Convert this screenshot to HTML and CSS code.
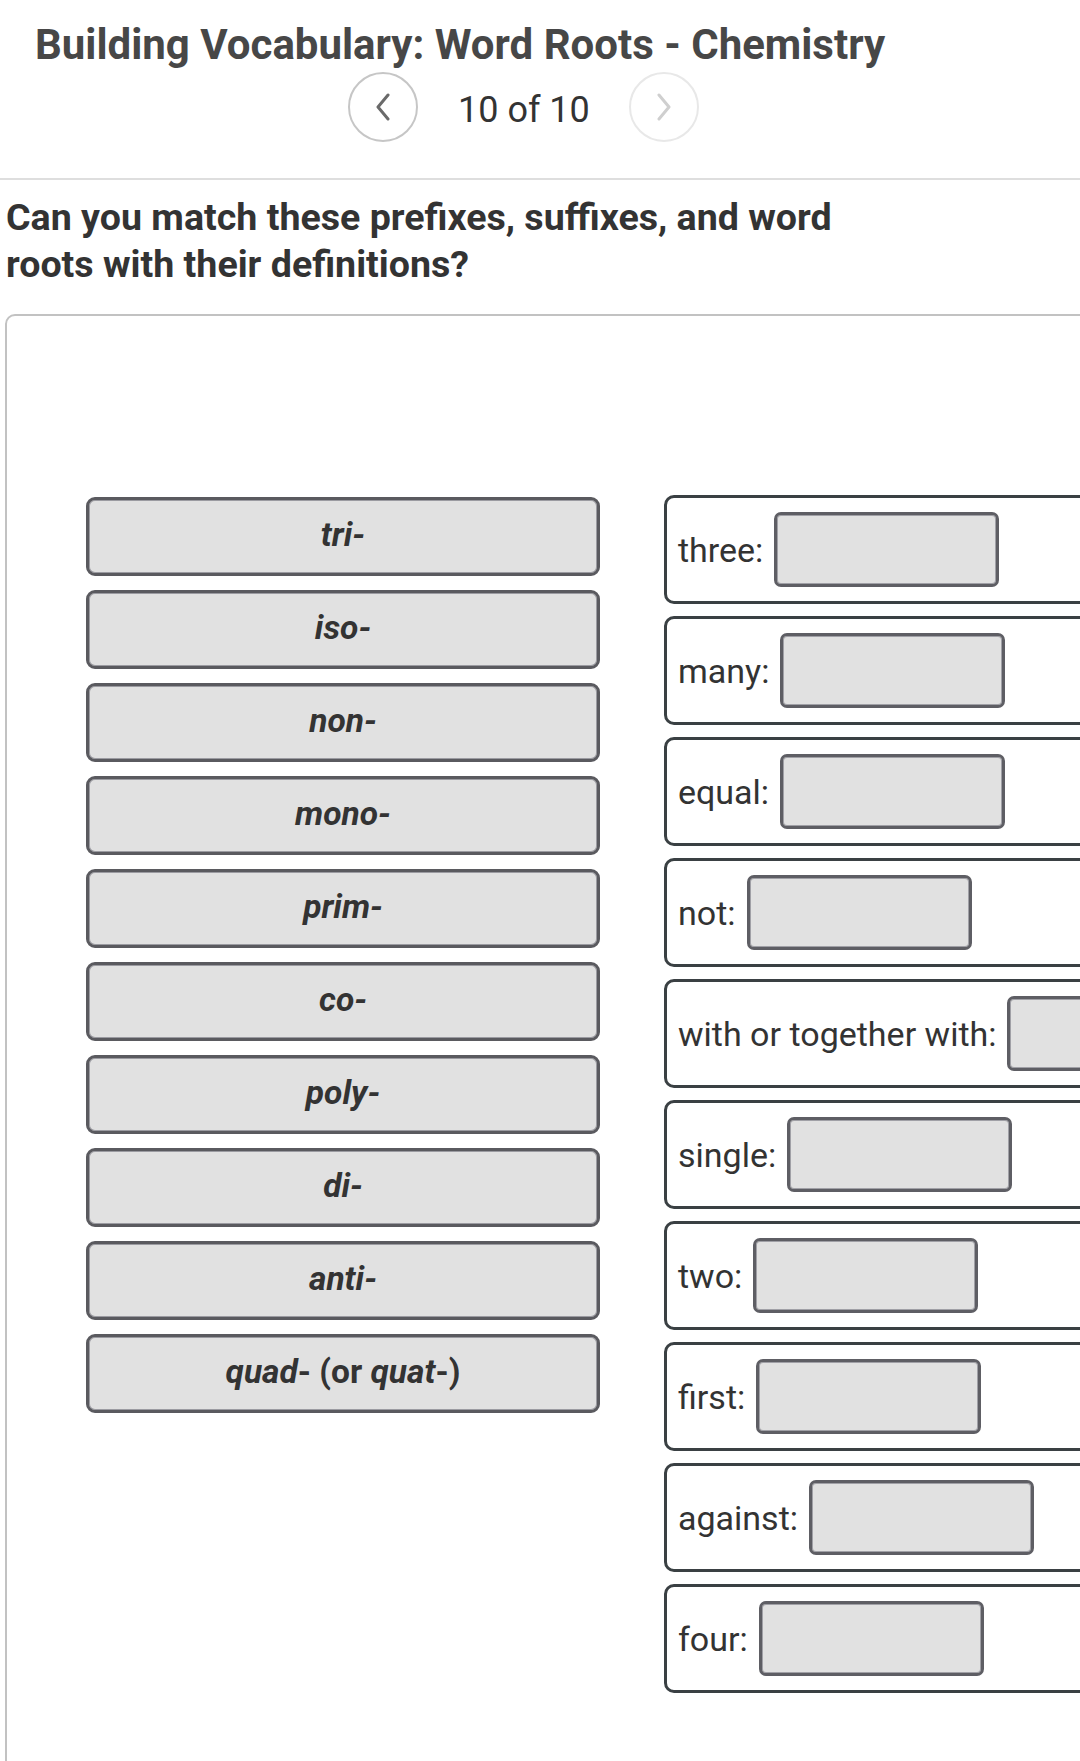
FILE: index.html
```html
<!DOCTYPE html>
<html>
<head>
<meta charset="utf-8">
<link rel="stylesheet" href="styles.css">
</head>
<body>
<header class="header">
  <h1 class="title">Building Vocabulary: Word Roots - Chemistry</h1>
  <nav class="pager">
    <button class="circle prev" aria-label="Previous">
      <svg width="16" height="28" viewBox="0 0 16 28"><polyline points="13,2 3,14 13,26" fill="none" stroke="#6a6a6a" stroke-width="3" stroke-linecap="round" stroke-linejoin="round"/></svg>
    </button>
    <span class="count">10 of 10</span>
    <button class="circle next" aria-label="Next">
      <svg width="16" height="28" viewBox="0 0 16 28"><polyline points="3,2 13,14 3,26" fill="none" stroke="#cfcfcf" stroke-width="3" stroke-linecap="round" stroke-linejoin="round"/></svg>
    </button>
  </nav>
</header>
<div class="divider"></div>
<h2 class="question">Can you match these prefixes, suffixes, and word roots with their definitions?</h2>
<section class="board">
  <div class="columns">
    <div class="tiles">
      <div class="tile"><span><i>tri-</i></span></div>
      <div class="tile"><span><i>iso-</i></span></div>
      <div class="tile"><span><i>non-</i></span></div>
      <div class="tile"><span><i>mono-</i></span></div>
      <div class="tile"><span><i>prim-</i></span></div>
      <div class="tile"><span><i>co-</i></span></div>
      <div class="tile"><span><i>poly-</i></span></div>
      <div class="tile"><span><i>di-</i></span></div>
      <div class="tile"><span><i>anti-</i></span></div>
      <div class="tile"><span><i>quad</i>- (or <i>quat</i>-)</span></div>
    </div>
    <div class="targets">
      <div class="target"><span class="label">three:</span><span class="drop"></span></div>
      <div class="target"><span class="label">many:</span><span class="drop"></span></div>
      <div class="target"><span class="label">equal:</span><span class="drop"></span></div>
      <div class="target"><span class="label">not:</span><span class="drop"></span></div>
      <div class="target"><span class="label">with or together with:</span><span class="drop"></span></div>
      <div class="target"><span class="label">single:</span><span class="drop"></span></div>
      <div class="target"><span class="label">two:</span><span class="drop"></span></div>
      <div class="target"><span class="label">first:</span><span class="drop"></span></div>
      <div class="target"><span class="label">against:</span><span class="drop"></span></div>
      <div class="target"><span class="label">four:</span><span class="drop"></span></div>
    </div>
  </div>
</section>
</body>
</html>
```

FILE: styles.css
```css
html {
  overflow: hidden;
}
body {
  margin: 0;
  background: #ffffff;
  font-family: Roboto, "Noto Sans", "Liberation Sans", sans-serif;
  color: #333333;
}
.header {
  padding: 20px 0 0 35px;
}
.title {
  margin: 0;
  font-size: 42px;
  line-height: 50px;
  font-weight: 700;
  color: #474747;
}
.pager {
  display: flex;
  align-items: center;
  margin-top: 2px;
  padding-left: 313px;
  height: 70px;
}
.circle {
  width: 70px;
  height: 70px;
  border-radius: 50%;
  background: #ffffff;
  display: flex;
  align-items: center;
  justify-content: center;
  padding: 0;
}
.prev {
  border: 2px solid #c6c6c6;
}
.next {
  border: 2px solid #e8e8e8;
}
.count {
  font-size: 36px;
  line-height: 40px;
  color: #333333;
  margin: 6px 39px 0 40px;
}
.divider {
  margin-top: 36px;
  height: 2px;
  background: #dedede;
}
.question {
  margin: 14px 0 0;
  padding-left: 6px;
  max-width: 870px;
  font-size: 37.6px;
  line-height: 47px;
  font-weight: 700;
  color: #333333;
}
.board {
  margin: 26px 0 0 5px;
  width: 1300px;
  height: 1600px;
  border: 2px solid #c2c2c2;
  border-radius: 10px 0 0 0;
  padding: 179px 0 0 79px;
  box-sizing: border-box;
}
.columns {
  display: flex;
  align-items: flex-start;
  gap: 64px;
}
.tiles {
  width: 514px;
  margin-top: 2px;
  display: flex;
  flex-direction: column;
  gap: 14px;
}
.tile {
  height: 79px;
  box-sizing: border-box;
  border: 3px solid #5a5a5f;
  box-shadow: inset 0 0 0 1px #9b9ba1;
  border-radius: 9px;
  background: #e1e1e1;
  display: flex;
  align-items: center;
  justify-content: center;
  padding-bottom: 4px;
  font-size: 33.5px;
  font-weight: 700;
  color: #333333;
}
.targets {
  width: 560px;
  display: flex;
  flex-direction: column;
  gap: 12px;
}
.target {
  height: 109px;
  box-sizing: border-box;
  border: 3px solid #3a4043;
  border-radius: 10px;
  background: #ffffff;
  display: flex;
  align-items: center;
  padding-left: 11px;
  white-space: nowrap;
}
.label {
  font-size: 34px;
  color: #333333;
}
.drop {
  flex: none;
  margin-left: 11px;
  width: 225px;
  height: 75px;
  box-sizing: border-box;
  border: 3px solid #5e5e64;
  box-shadow: inset 0 0 0 1px #a0a0a6;
  border-radius: 7px;
  background: #e1e1e1;
}
```
